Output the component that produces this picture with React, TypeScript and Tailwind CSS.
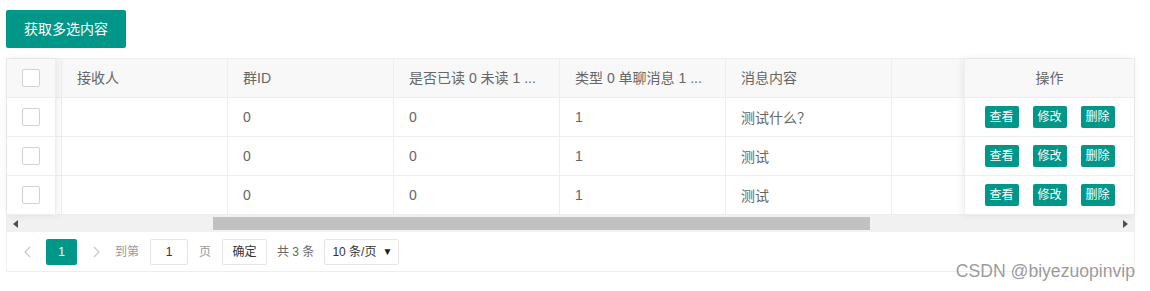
import React from 'react';

const FONT = { fontFamily: '"Liberation Sans", "Noto Sans CJK SC", sans-serif' };

const headers = ['接收人', '群ID', '是否已读 0 未读 1 ...', '类型 0 单聊消息 1 ...', '消息内容', ''];

const rows = [
  ['', '0', '0', '1', '测试什么？', ''],
  ['', '0', '0', '1', '测试', ''],
  ['', '0', '0', '1', '测试', ''],
];

function Checkbox() {
  return <span className="block w-[18px] h-[18px] border border-[#d2d2d2] rounded-[2px] bg-white" />;
}

function Cell({ children, cjk }: { children?: React.ReactNode; cjk?: boolean }) {
  return (
    <div className="w-[166px] shrink-0 h-full border-r border-[#eeeeee] px-[15px] flex items-center text-[14px] text-[#666]">
      <span className={`whitespace-nowrap ${cjk ? "font-['Noto_Sans_CJK_SC']" : ''}`}>{children}</span>
    </div>
  );
}

function Row({ head, children }: { head?: boolean; children: React.ReactNode }) {
  return (
    <div className={`h-[39px] flex border-b border-[#eeeeee] ${head ? 'bg-[#f8f8f8]' : 'bg-white'}`}>{children}</div>
  );
}

function SmallBtn({ children }: { children: React.ReactNode }) {
  return (
    <button className="w-[34px] h-[22px] rounded-[2px] bg-[#009688] text-white text-[12px] leading-[22px]">
      {children}
    </button>
  );
}

function Chevron({ dir }: { dir: 'l' | 'r' }) {
  return (
    <svg width="9" height="12" viewBox="0 0 9 12" className="shrink-0">
      <polyline
        points={dir === 'l' ? '7,1 2,6 7,11' : '2,1 7,6 2,11'}
        fill="none"
        stroke="#c8c8c8"
        strokeWidth="1.2"
      />
    </svg>
  );
}

export default function App() {
  return (
    <div className="relative w-[1150px] h-[291px] bg-white pt-[10px] px-[6px]" style={FONT}>
      <button className="h-[38px] px-[18px] rounded-[2px] bg-[#009688] text-white text-[14px]">获取多选内容</button>

      <div className="mt-[10px] w-[1129px] border border-[#eeeeee]">
        <div className="flex">
          {/* fixed left */}
          <div className="relative z-10 w-[49px] shrink-0 border-r border-[#eeeeee] shadow-[1px_0_8px_rgba(0,0,0,0.08)]">
            {[0, 1, 2, 3].map((i) => (
              <div
                key={i}
                className={`h-[39px] flex items-center justify-center border-b border-[#eeeeee] ${
                  i === 0 ? 'bg-[#f8f8f8]' : 'bg-white'
                }`}
              >
                <Checkbox />
              </div>
            ))}
          </div>

          {/* main scroll area */}
          <div className="w-[908px] shrink-0 overflow-hidden">
            <Row head>
              <div className="w-[6px] shrink-0 border-r border-[#eeeeee]" />
              {headers.map((h, i) => (
                <Cell key={i}>{h}</Cell>
              ))}
            </Row>
            {rows.map((r, ri) => (
              <Row key={ri}>
                <div className="w-[6px] shrink-0 border-r border-[#eeeeee]" />
                {r.map((c, ci) => (
                  <Cell key={ci} cjk={ci === 4}>
                    {c}
                  </Cell>
                ))}
              </Row>
            ))}
          </div>

          {/* fixed right */}
          <div className="relative z-10 w-[170px] shrink-0 border-l border-[#eeeeee] shadow-[-1px_0_8px_rgba(0,0,0,0.08)]">
            <div className="h-[39px] flex items-center justify-center border-b border-[#eeeeee] bg-[#f8f8f8] text-[14px] text-[#666]">
              操作
            </div>
            {rows.map((_, i) => (
              <div key={i} className="h-[39px] flex items-center justify-center gap-[14px] border-b border-[#eeeeee] bg-white">
                <SmallBtn>查看</SmallBtn>
                <SmallBtn>修改</SmallBtn>
                <SmallBtn>删除</SmallBtn>
              </div>
            ))}
          </div>
        </div>

        {/* scrollbar */}
        <div className="h-[17px] flex items-center bg-[#f1f1f1]">
          <div className="w-[17px] h-full flex items-center justify-center">
            <svg width="5" height="8" viewBox="0 0 5 8">
              <polygon points="5,0 0,4 5,8" fill="#505050" />
            </svg>
          </div>
          <div className="flex-1 h-full flex items-center">
            <div className="ml-[189px] w-[657px] h-[13px] bg-[#c1c1c1]" />
          </div>
          <div className="w-[17px] h-full flex items-center justify-center">
            <svg width="5" height="8" viewBox="0 0 5 8">
              <polygon points="0,0 5,4 0,8" fill="#505050" />
            </svg>
          </div>
        </div>

        {/* pagination */}
        <div className="h-[39px] flex items-center pl-[16px] text-[12px]">
          <Chevron dir="l" />
          <span className="ml-[14px] w-[31px] h-[26px] rounded-[2px] bg-[#009688] text-white flex items-center justify-center">
            1
          </span>
          <span className="ml-[15px]">
            <Chevron dir="r" />
          </span>
          <span className="ml-[14px] text-[#999]">到第</span>
          <span className="ml-[11px] w-[38px] h-[26px] border border-[#e6e6e6] rounded-[2px] flex items-center justify-center text-[#333]">
            1
          </span>
          <span className="ml-[11px] text-[#999]">页</span>
          <button className="ml-[11px] w-[45px] h-[26px] border border-[#e6e6e6] rounded-[2px] bg-white text-[#333] text-[12px]">
            确定
          </button>
          <span className="ml-[10px] text-[#666]">共 3 条</span>
          <div className="ml-[10px] w-[75px] h-[26px] border border-[#e6e6e6] rounded-[2px] flex items-center justify-between pl-[7px] pr-[6px] text-[#333]">
            <span>10 条/页</span>
            <span className="text-[10px] text-[#222]">▼</span>
          </div>
        </div>
      </div>

      <div className="absolute right-[15px] top-[258px] text-[17.6px] text-[rgba(110,110,110,0.7)] whitespace-nowrap">
        CSDN @biyezuopinvip
      </div>
    </div>
  );
}
